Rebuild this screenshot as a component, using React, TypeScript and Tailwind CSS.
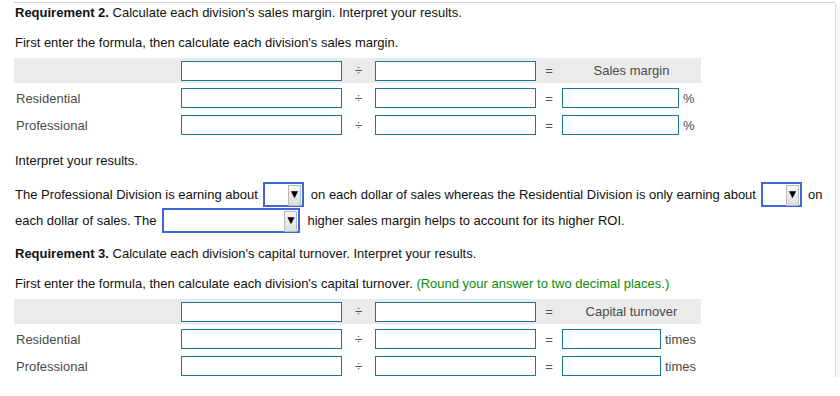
import React from "react";

const font = { fontFamily: '"Liberation Sans", Arial, sans-serif' };

function Box({ kind }: { kind: "main" | "pct" | "times" }) {
  if (kind === "main") return <div className="h-[20px] w-[161px] border border-[#1b7797] bg-white" />;
  if (kind === "pct") return <div className="h-[20px] w-[117px] border border-[#1b7797] bg-white" />;
  return <div className="h-[20px] w-[99px] border border-[#1b7797] bg-white" />;
}

function Div() {
  return <div className="w-[33px] pt-[1px] text-center text-[13px] leading-[20px] text-[#555]">÷</div>;
}
function Eq() {
  return <div className="w-[26px] pt-[1px] text-center text-[13px] leading-[20px] text-[#555]">=</div>;
}

function FormulaTable({ title, unit }: { title: string; unit: "%" | "times" }) {
  const kind = unit === "%" ? "pct" : "times";
  const row = (label: string, extra: string) => (
    <div className={`flex h-[20px] items-center ${extra}`}>
      <div className="w-[167px] pl-[2px] pt-[2px] text-[13px] leading-[20px] text-[#4a4a4a]">{label}</div>
      <Box kind="main" />
      <Div />
      <Box kind="main" />
      <Eq />
      <div className="flex w-[139px] items-center">
        <Box kind={kind} />
        <span className="ml-[4px] pt-[2px] text-[13px] leading-[20px] text-[#4a4a4a]">{unit}</span>
      </div>
    </div>
  );
  return (
    <div className="w-[687px]">
      <div className="flex h-[25px] items-center bg-[#ebebeb]">
        <div className="w-[167px]" />
        <Box kind="main" />
        <Div />
        <Box kind="main" />
        <Eq />
        <div className="w-[139px] pt-[1px] text-center text-[13px] leading-[20px] text-[#4a4a4a]">{title}</div>
      </div>
      {row("Residential", "mt-[5px]")}
      {row("Professional", "mt-[7px]")}
    </div>
  );
}

function Select({ wide }: { wide?: boolean }) {
  return (
    <div
      className={`flex h-[25px] items-start justify-end border-2 border-[#3f66d8] bg-white pr-[1px] pt-[1px] ${
        wide ? "w-[138px]" : "w-[41px]"
      }`}
    >
      <div className="flex h-[21px] w-[13px] items-start justify-center border border-[#b9b9b9] bg-gradient-to-b from-[#f7f7f7] to-[#dedede] pt-[2px] text-[12px] leading-[12px] text-black">
        ▼
      </div>
    </div>
  );
}

export default function App() {
  return (
    <div className="relative h-[396px] w-[840px] overflow-hidden bg-white text-[#111]" style={font}>
      <div className="flex">
        <div className="ml-[14px] mt-[2px] w-[821px] border-t border-[#c9d2e1]">
          <div className="pl-[1px] pt-[2px] text-[13px] leading-[16px]">
            <p>
              <b>Requirement 2.</b> Calculate each division's sales margin. Interpret your results.
            </p>
            <p className="mt-[14px]">First enter the formula, then calculate each division's sales margin.</p>
          </div>
          <div className="mt-[7px]">
            <FormulaTable title="Sales margin" unit="%" />
          </div>
          <div className="pl-[1px] text-[13px] leading-[16px]">
            <p className="mt-[18px]">Interpret your results.</p>
            <div className="mt-[12px] flex h-[26px] items-center">
              <span className="pt-[1px]">The Professional Division is earning about</span>
              <span className="ml-[5px]">
                <Select />
              </span>
              <span className="ml-[7px] pt-[1px]">
                on each dollar of sales whereas the Residential Division is only earning about
              </span>
              <span className="ml-[5px]">
                <Select />
              </span>
              <span className="ml-[6px] pt-[1px]">on</span>
            </div>
            <div className="flex h-[26px] items-center">
              <span className="pt-[1px]">each dollar of sales. The</span>
              <span className="ml-[6px]">
                <Select wide />
              </span>
              <span className="ml-[7px] pt-[1px]">higher sales margin helps to account for its higher ROI.</span>
            </div>
            <p className="mt-[13px]">
              <b>Requirement 3.</b> Calculate each division's capital turnover. Interpret your results.
            </p>
            <p className="mt-[14px]">
              First enter the formula, then calculate each division's capital turnover.{" "}
              <span className="text-[#0a8c0a]">(Round your answer to two decimal places.)</span>
            </p>
          </div>
          <div className="mt-[7px]">
            <FormulaTable title="Capital turnover" unit="times" />
          </div>
        </div>
        <div className="mt-[3px] h-[374px] w-[5px] border-l border-[#dcdcdc] bg-[#fafafa]" />
      </div>
    </div>
  );
}
